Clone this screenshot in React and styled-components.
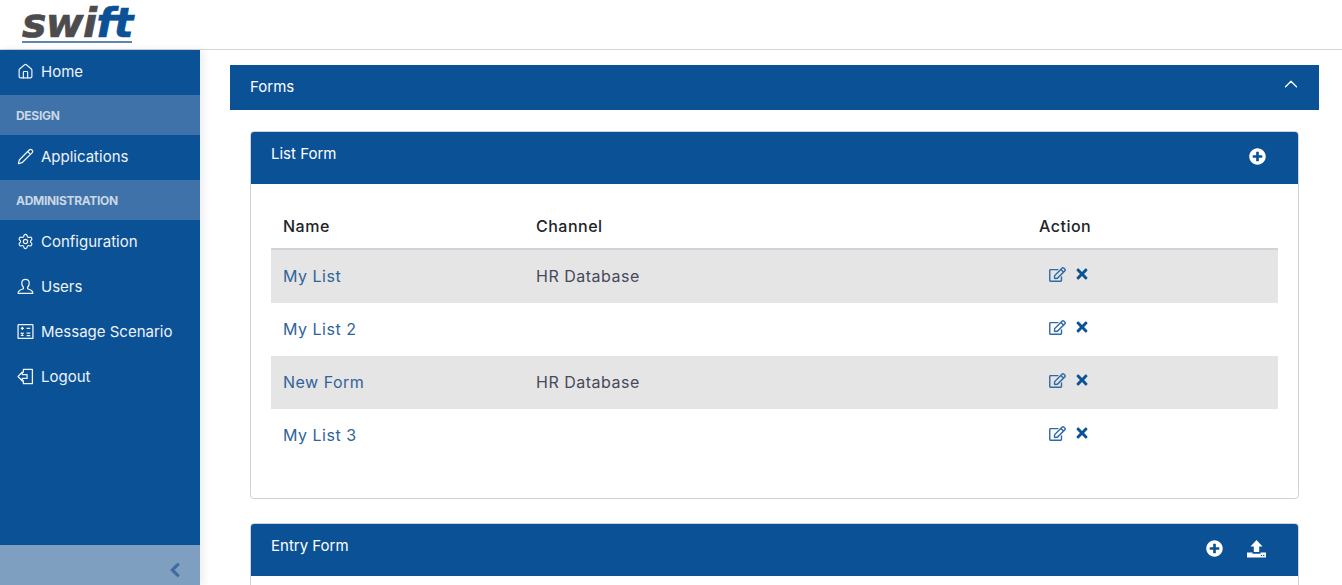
import React from 'react';
import styled, { createGlobalStyle } from 'styled-components';
import { Home, Pencil, Settings, ChevronUp } from 'lucide-react';
import { FaPlusCircle, FaTimes, FaRegEdit, FaChevronLeft } from 'react-icons/fa';

const FONT = `Inter, 'Open Sans', 'Liberation Sans', sans-serif`;
const BLUE = '#0b5195';

const GlobalStyle = createGlobalStyle`
  html, body { margin: 0; padding: 0; background: #fff; }
  body { font-family: ${FONT}; }
  * { box-sizing: border-box; }
`;

const Page = styled.div`
  height: 585px;
  overflow: hidden;
  display: flex;
  flex-direction: column;
`;

const Header = styled.header`
  height: 50px;
  flex: none;
  padding-left: 22px;
  border-bottom: 1px solid #d4d4d4;
`;

const Logo = styled.div`
  width: 110px;
  height: 43px;
  font-family: 'DejaVu Sans', sans-serif;
  font-style: italic;
  font-weight: 700;
  font-size: 41px;
  line-height: 47px;
  letter-spacing: -0.6px;
  color: #4c4c4e;
  -webkit-text-stroke: 0.7px currentColor;
  border-bottom: 2px solid #5f86b3;
  white-space: nowrap;

  span {
    color: ${BLUE};
  }
`;

const Body = styled.div`
  flex: 1;
  min-height: 0;
  display: flex;
`;

const Sidebar = styled.nav`
  width: 200px;
  flex: none;
  display: flex;
  flex-direction: column;
  background: ${BLUE};
  box-shadow: 3px 0 8px rgba(0, 0, 0, 0.08);
`;

const NavItem = styled.div`
  height: 45px;
  display: flex;
  align-items: center;
  gap: 7px;
  padding: 0 0 2px 17px;
  color: #eef3f8;
  font-size: 15px;

  svg {
    flex: none;
    width: 17px;
    height: 17px;
  }
`;

const NavGroup = styled.div`
  height: 40px;
  display: flex;
  align-items: center;
  padding-left: 16px;
  background: #3f72a8;
  color: #c9d7e6;
  font-size: 12px;
  font-weight: 700;
  letter-spacing: -0.3px;
`;

const SidebarFooter = styled.div`
  margin-top: auto;
  height: 40px;
  display: flex;
  align-items: center;
  justify-content: flex-end;
  padding: 10px 17px 0 0;
  background: #7f9fc0;
  color: #3f6c9f;
  font-size: 16px;

  svg {
    stroke: currentColor;
    stroke-width: 30px;
  }
`;

const Main = styled.main`
  flex: 1;
  min-width: 0;
  padding: 15px 23px 0 30px;
`;

const PanelBar = styled.div`
  height: 45px;
  display: flex;
  align-items: center;
  justify-content: space-between;
  padding: 0 20px 2px;
  background: ${BLUE};
  color: #fff;
  font-size: 15px;

  svg {
    margin-top: -6px;
    margin-right: -3px;
  }
`;

const Cards = styled.div`
  display: flex;
  flex-direction: column;
  gap: 24px;
  padding: 21px 20px 0;
`;

const Card = styled.section`
  border: 1px solid #ced4da;
  border-radius: 4px;
  overflow: hidden;
  flex: none;
`;

const CardHeader = styled.div`
  height: 52px;
  display: flex;
  justify-content: space-between;
  padding: 13px 32px 0 20px;
  background: ${BLUE};
  color: #fff;
  font-size: 15px;
  line-height: 17px;
`;

const CardActions = styled.div`
  display: flex;
  gap: 24px;
  padding-top: 3px;
  font-size: 17px;
`;

const CardBody = styled.div`
  padding: 21px 20px 36px;
  min-height: ${(p) => p.$minHeight || 0}px;
`;

const Table = styled.table`
  width: 100%;
  border-collapse: separate;
  border-spacing: 0;
  table-layout: fixed;
  font-size: 16px;
  letter-spacing: 0.5px;
`;

const Th = styled.th`
  width: ${(p) => p.$width || 'auto'};
  height: 45px;
  padding: 0 12px 1px;
  text-align: left;
  font-weight: 500;
  color: #212529;
  border-bottom: 2px solid #ced4da;
`;

const Row = styled.tr`
  height: 53px;
  background: ${(p) => (p.$striped ? '#e5e5e5' : '#fff')};
`;

const Td = styled.td`
  padding: 0 12px 1px;
  color: #454a5a;
`;

const NameLink = styled.a`
  color: #2f6399;
  text-decoration: none;
`;

const RowActions = styled.div`
  display: flex;
  align-items: center;
  gap: 10px;
  margin: -4px 0 0 10px;
  color: ${BLUE};

  svg:first-child {
    width: 17px;
    height: 15px;
    color: #2f6aa5;
  }

  svg:last-child {
    width: 12px;
    height: 16px;
  }
`;

function UserIcon() {
  return (
    <svg viewBox="0 0 16 16" fill="none" stroke="currentColor" strokeWidth="1.2" strokeLinejoin="round">
      <path d="M8 1.200c-2.200 0-3.500 1.500-3.500 3.700 0 1.700.6 3 1.500 3.800v1.400c-2 .7-4 1.500-4.600 2.700-.2.500-.2 1.300-.2 1.700h13.600c0-.4 0-1.200-.2-1.700-.6-1.200-2.600-2-4.600-2.700V8.700c.9-.8 1.500-2.100 1.500-3.800 0-2.200-1.300-3.700-3.500-3.700z" />
    </svg>
  );
}

function ScenarioIcon() {
  return (
    <svg viewBox="0 0 16 16" fill="none" stroke="currentColor" strokeWidth="1.2">
      <rect x="1" y="1.500" width="14" height="13" rx="0.500" />
      <path d="M3.500 5h3M5 3.500v3M9 5h3.500M3.600 9.200l2.600 2.600M6.200 9.200l-2.600 2.600M9 9.500h3.500M9 11.800h3.500" />
    </svg>
  );
}

function LogoutIcon() {
  return (
    <svg viewBox="0 0 16 16" fill="none" stroke="currentColor" strokeWidth="1.2" strokeLinejoin="round">
      <path d="M6 4.500V1.200h8.500v13.600H6v-3.300" />
      <path d="M9.500 6.200H5V3.800L1 8l4 4.200V9.800h4.500z" />
    </svg>
  );
}

function TrayUploadIcon() {
  return (
    <svg width="19" height="18" viewBox="0 0 19 18" fill="#fff">
      <path d="M9.500 0L15.500 6.500h-3.300v5.500H6.800V6.500H3.500z" />
      <path d="M0 12.500h5.500v1.200h8V12.500H19V17.500H0z" />
      <circle cx="14.500" cy="15.400" r="0.700" fill={BLUE} />
      <circle cx="16.800" cy="15.400" r="0.700" fill={BLUE} />
    </svg>
  );
}

const rows = [
  { name: 'My List', channel: 'HR Database' },
  { name: 'My List 2', channel: '' },
  { name: 'New Form', channel: 'HR Database' },
  { name: 'My List 3', channel: '' },
];

export default function App() {
  return (
    <Page>
      <GlobalStyle />
      <Header>
        <Logo>
          swi<span>ft</span>
        </Logo>
      </Header>
      <Body>
        <Sidebar>
          <NavItem><Home strokeWidth={1.7} />Home</NavItem>
          <NavGroup>DESIGN</NavGroup>
          <NavItem><Pencil strokeWidth={1.7} />Applications</NavItem>
          <NavGroup>ADMINISTRATION</NavGroup>
          <NavItem><Settings strokeWidth={1.7} />Configuration</NavItem>
          <NavItem><UserIcon />Users</NavItem>
          <NavItem><ScenarioIcon />Message Scenario</NavItem>
          <NavItem><LogoutIcon />Logout</NavItem>
          <SidebarFooter><FaChevronLeft /></SidebarFooter>
        </Sidebar>
        <Main>
          <PanelBar>
            Forms
            <ChevronUp size={22} strokeWidth={1.4} />
          </PanelBar>
          <Cards>
            <Card>
              <CardHeader>
                List Form
                <CardActions><FaPlusCircle /></CardActions>
              </CardHeader>
              <CardBody>
                <Table>
                  <thead>
                    <tr>
                      <Th $width="253px">Name</Th>
                      <Th $width="503px">Channel</Th>
                      <Th>Action</Th>
                    </tr>
                  </thead>
                  <tbody>
                    {rows.map((row, i) => (
                      <Row key={row.name} $striped={i % 2 === 0}>
                        <Td><NameLink href="#">{row.name}</NameLink></Td>
                        <Td>{row.channel}</Td>
                        <Td>
                          <RowActions>
                            <FaRegEdit />
                            <FaTimes />
                          </RowActions>
                        </Td>
                      </Row>
                    ))}
                  </tbody>
                </Table>
              </CardBody>
            </Card>
            <Card>
              <CardHeader>
                Entry Form
                <CardActions><FaPlusCircle /><TrayUploadIcon /></CardActions>
              </CardHeader>
              <CardBody $minHeight={120} />
            </Card>
          </Cards>
        </Main>
      </Body>
    </Page>
  );
}
